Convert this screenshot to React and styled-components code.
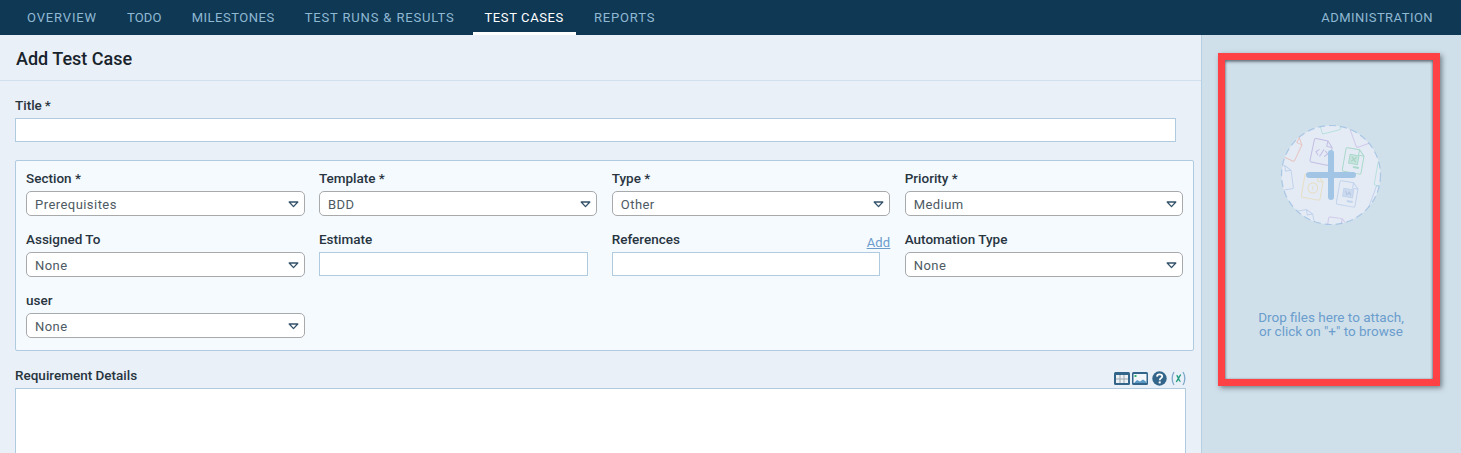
import React from "react";
import styled, { createGlobalStyle } from "styled-components";

const Global = createGlobalStyle`
  html, body { margin: 0; padding: 0; }
  body { font-family: Roboto, "Liberation Sans", sans-serif; background: #e9f0f7; }
  * { box-sizing: border-box; }
`;
const Page = styled.div`
  width: 1461px; height: 453px; overflow: hidden; display: flex; flex-direction: column;
`;
const TopBar = styled.nav`
  height: 35px; background: #0f3854; display: flex; align-items: stretch; padding: 0 13px 0 12px; flex: none;
`;
const NavItem = styled.a`
  padding: 3px 12px 0; margin: 0 3px 0 ${p => (p.$push ? "auto" : "3px")};
  display: flex; align-items: center; font-size: 13px; text-transform: uppercase;
  letter-spacing: ${p => p.$track ?? 0.85}px;
  color: ${p => (p.$active ? "#fff" : "#8fb9d3")};
  border-bottom: 3px solid ${p => (p.$active ? "#fff" : "transparent")};
`;
const Body = styled.div`flex: 1; display: flex; min-height: 0;`;
const Main = styled.main`
  width: 1202px; flex: none; border-right: 1px solid #b5cfe3; background: #e9f0f7;
`;
const Header = styled.header`
  height: 46px; border-bottom: 1px solid #cfe0ec; padding: 2px 15px 0 16px; display: flex; align-items: center;
`;
const Title = styled.h1`margin: 0; font-size: 18px; font-weight: 500; color: #18232c;`;
const Form = styled.div`padding: 17px 15px 0;`;
const Label = styled.label`
  display: flex; align-items: center; height: 20px; padding-bottom: 6px; font-size: 13.5px; font-weight: 500;
  color: #28353f; gap: 3px;
`;
const TextInput = styled.div`
  height: 24px; width: ${p => p.$w || "100%"}; background: #fff; border: 1px solid #b0cbe0;
`;
const Grid = styled.section`
  margin-top: 18px; width: 1179px; height: 191px; border: 1px solid #b0cbe0; border-radius: 2px; background: #f5faff;
  padding: 10px;
  display: grid; grid-template-columns: repeat(4, 278.6px); column-gap: 14.3px; row-gap: 16px; align-content: start;
`;
const Field = styled.div`display: flex; flex-direction: column;`;
const LabelRow = styled.div`display: flex; justify-content: space-between; align-items: flex-start;`;
const Select = styled.div`
  height: 25px; background: #fff; border: 1px solid #a7a9ab; border-radius: 5px; padding: 1px 5px 0 8px;
  display: flex; align-items: center; justify-content: space-between; font-size: 13px; letter-spacing: .45px; color: #4d5a63;
`;
const AddLink = styled.a`font-size: 13px; line-height: 15px; margin-top: 3px; letter-spacing: .2px; color: #6c9ccc; text-decoration: underline;`;
const DetailsHead = styled.div`
  margin-top: 14px; width: 1171px; height: 23px; display: flex; justify-content: space-between; align-items: flex-end;
`;
const Tools = styled.div`display: flex; align-items: center; height: 15px; margin-bottom: 2px;`;
const ToolIcon = styled.svg`display: block; flex: none; margin-left: ${p => p.$gap || 0}px;`;
const BigInput = styled(TextInput)`width: 1171px; height: 100px;`;
const Side = styled.aside`
  flex: 1; background: #d0e0ea; padding: 18px 21px 0 16px;
`;
const DropBox = styled.div`
  width: 222px; height: 333px; border: 7px solid #fd4144; padding: 64px 0 0 4px;
  box-shadow: 2px 2px 5px rgba(40,50,60,.55), inset 0 2px 3px rgba(40,50,60,.55), inset 1px 0 2px rgba(40,50,60,.2), inset -1px 0 2px rgba(40,50,60,.25);
  display: flex; flex-direction: column; align-items: center;
`;
const Hint = styled.p`
  margin: 84px 0 0; text-align: center; font-size: 13.5px; line-height: 14px; color: #6b9dcd;
`;

const Caret = () => (
  <svg width="11" height="7" viewBox="0 0 11 7"><path d="M1.200 1h8.600L5.500 5.600z" fill="#fff" stroke="#33526a" strokeWidth="1.300" strokeLinejoin="round" /></svg>
);
const Sel = ({ v }) => <Select>{v}<Caret /></Select>;

const Doc = ({ x, y, c, r = 0, children }) => (
  <g transform={`translate(${x} ${y}) rotate(${r})`} fill="none" stroke={c} strokeWidth="1" opacity=".42">
    <path d="M-8.500-12H3.500l5.500 5.500V10.500a1.500 1.500 0 0 1-1.500 1.500h-16a1.500 1.500 0 0 1-1.500-1.500v-21a1.500 1.500 0 0 1 1.500-1.500zM3.500-12v5.500h5.500" />
    {children}
  </g>
);
const Circle = () => (
  <svg width="102" height="102" viewBox="0 0 102 102">
    <defs><clipPath id="c"><circle cx="51" cy="51" r="49.500" /></clipPath></defs>
    <circle cx="51" cy="51" r="49.500" fill="#e5ebf5" stroke="#a9c7e5" strokeWidth="1.200" strokeDasharray="7 4" />
    <g clipPath="url(#c)">
      <Doc x={42} y={28} c="#8f83cc" r={12}><path d="M-3-2l-3 3 3 3M3-2l3 3-3 3M1.500-3l-3 8" /></Doc>
      <Doc x={74} y={37} c="#58c092" r={10}><rect x="-5" y="-6" width="9" height="9" fill="#9bdcbd" /><path d="M-3-4l5 5M2-4l-5 5" stroke="#4aa97a" /><path d="M0 6h6" strokeWidth="2" /></Doc>
      <Doc x={33} y={63} c="#e6cf80" r={10}><circle cx="0" cy="1" r="5" /><path d="M0-1v4" /></Doc>
      <Doc x={68} y={70} c="#8fb3e0" r={10}><rect x="-5" y="-5" width="10" height="8" fill="#a8c4e8" /><path d="M-3-3l2 4 2-3 2 3" stroke="#6f92c8" /><path d="M0 7h6" strokeWidth="2" /></Doc>
      <Doc x={3} y={54} c="#8fb3e0" r={-8} />
      <Doc x={11} y={23} c="#e6927f" r={25} />
      <Doc x={49} y={-4} c="#7fcfc4" r={-15} />
      <Doc x={82} y={9} c="#b09cdc" r={-20} />
      <Doc x={106} y={51} c="#7fcfc4" r={10} />
      <Doc x={25} y={98} c="#8fb3e0" r={-10} />
      <Doc x={57} y={106} c="#b09cdc" r={8} />
      <Doc x={102} y={76} c="#8fb3e0" r={20} />
    </g>
    <path d="M51 29v44M29 51h44" stroke="#a3c5e5" strokeWidth="6" strokeLinecap="round" />
  </svg>
);

const IconTable = () => (
  <ToolIcon width="16" height="13" viewBox="0 0 16 13"><rect width="16" height="13" rx="1.500" fill="#33658a" /><rect x="2" y="3" width="12" height="8" fill="#eef1f4" /><path d="M6 3v8M10 3v8M2 7h12" stroke="#9aa7b2" /></ToolIcon>
);
const IconImage = () => (
  <ToolIcon $gap={2} width="16" height="13" viewBox="0 0 16 13"><rect width="16" height="13" rx="1.500" fill="#33658a" /><rect x="1.500" y="2" width="13" height="9" fill="#f4f7fa" /><path d="M2 11l3-3 3 1.500 3-2 3.500 2.500v1z" fill="#5a98c6" /><rect x="2.500" y="3" width="2" height="2" fill="#35b56a" /></ToolIcon>
);
const IconHelp = () => (
  <ToolIcon $gap={4} width="15" height="15" viewBox="0 0 15 15"><circle cx="7.500" cy="7.500" r="7.200" fill="#33658a" /><path d="M5 5.600c.1-3 5.200-3 5.200-.2 0 1.800-2.500 1.700-2.500 3.800" fill="none" stroke="#fff" strokeWidth="1.800" /><rect x="6.700" y="10.400" width="2" height="2" fill="#fff" /></ToolIcon>
);
const IconVar = () => (
  <ToolIcon $gap={4} width="15" height="15" viewBox="0 0 15 15" fill="none"><path d="M3 1C.6 4.500.6 10.500 3 14M12 1c2.400 3.500 2.400 9.500 0 13" stroke="#7fa8cc" strokeWidth="1.300" /><path d="M5.300 11l4.400-7.500M5.500 4.500c2 0 2 6 4 6" stroke="#1c9a7c" strokeWidth="1.400" /></ToolIcon>
);

export default function App() {
  return (
    <Page>
      <Global />
      <TopBar>
        <NavItem>Overview</NavItem>
        <NavItem $track={0.2}>Todo</NavItem>
        <NavItem $track={0.5}>Milestones</NavItem>
        <NavItem>Test Runs &amp; Results</NavItem>
        <NavItem $active $track={0.6}>Test Cases</NavItem>
        <NavItem>Reports</NavItem>
        <NavItem $push $track={0.45}>Administration</NavItem>
      </TopBar>
      <Body>
        <Main>
          <Header><Title>Add Test Case</Title></Header>
          <Form>
            <Label>Title <span>*</span></Label>
            <TextInput $w="1161px" />
            <Grid>
              <Field><Label>Section *</Label><Sel v="Prerequisites" /></Field>
              <Field><Label>Template *</Label><Sel v="BDD" /></Field>
              <Field><Label>Type *</Label><Sel v="Other" /></Field>
              <Field><Label>Priority *</Label><Sel v="Medium" /></Field>
              <Field><Label>Assigned To</Label><Sel v="None" /></Field>
              <Field><Label>Estimate</Label><TextInput $w="269px" /></Field>
              <Field>
                <LabelRow><Label>References</Label><AddLink>Add</AddLink></LabelRow>
                <TextInput $w="268px" />
              </Field>
              <Field><Label>Automation Type</Label><Sel v="None" /></Field>
              <Field><Label>user</Label><Sel v="None" /></Field>
            </Grid>
            <DetailsHead>
              <Label>Requirement Details</Label>
              <Tools><IconTable /><IconImage /><IconHelp /><IconVar /></Tools>
            </DetailsHead>
            <BigInput />
          </Form>
        </Main>
        <Side>
          <DropBox>
            <Circle />
            <Hint>Drop files here to attach,<br />or click on "+" to browse</Hint>
          </DropBox>
        </Side>
      </Body>
    </Page>
  );
}
